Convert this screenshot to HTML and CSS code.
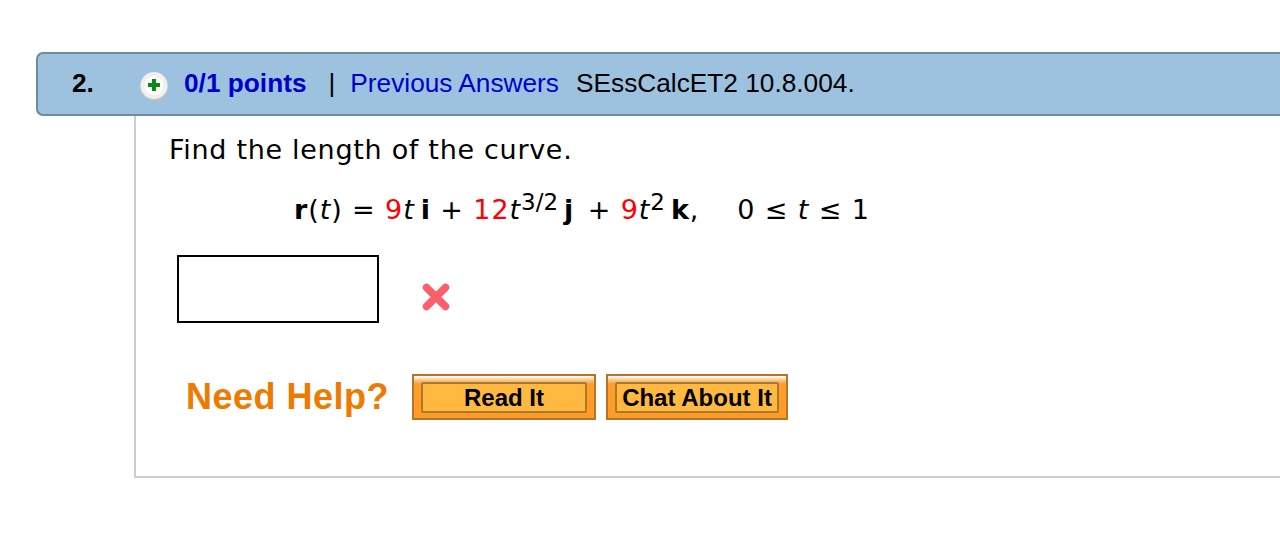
FILE: index.html
```html
<!DOCTYPE html>
<html lang="en">
<head>
    <meta charset="UTF-8">
    <meta name="viewport" content="width=device-width, initial-scale=1.0">
    <title>Question 2</title>
    <link rel="stylesheet" href="styles.css">
</head>
<body>
    <div class="question">
        <div class="header">
            <span class="number">2.</span>
            <svg class="plus" width="30" height="30" viewBox="0 0 30 30">
                <circle cx="15" cy="15.500" r="14" fill="#c4c4c4"/>
                <circle cx="15" cy="14.500" r="13.500" fill="#f0f0ee"/>
                <circle cx="15" cy="14.500" r="9.500" fill="#fff"/>
                <path d="M13 8h4v4h4v4h-4v4h-4v-4H9v-4h4z" fill="#0a8a14"/>
            </svg>
            <span class="points">0/1 points</span>
            <span class="sep">|</span>
            <a class="prev" href="#">Previous Answers</a>
            <span class="source">SEssCalcET2 10.8.004.</span>
        </div>
        <div class="body">
            <p class="prompt">Find the length of the curve.</p>
            <p class="formula"><b>r</b>(<i>t</i>) = <span class="red">9</span><i>t</i><b class="vec">i</b> + <span class="red">12</span><i>t</i><sup>3/2</sup><b class="vec vec-j">j</b> + <span class="red">9</span><i>t</i><sup>2</sup><b class="vec">k</b>,<span class="range">0 ≤ <i>t</i> ≤ 1</span></p>
            <div class="answer">
                <input class="answer-box" type="text">
                <svg class="wrong" width="32" height="32" viewBox="0 0 32 32">
                    <path d="M6.500 6.500l19 19M25.500 6.500l-19 19" stroke="#fb5f6b" stroke-width="7.500" stroke-linecap="round"/>
                </svg>
            </div>
            <div class="help">
                <span class="help-label">Need Help?</span>
                <span class="btn btn-read"><span class="btn-inner">Read It</span></span>
                <span class="btn btn-chat"><span class="btn-inner">Chat About It</span></span>
            </div>
        </div>
    </div>
</body>
</html>
```

FILE: styles.css
```css
body {
    margin: 0;
    background: #fff;
    font-family: "Liberation Sans", Arial, sans-serif;
    color: #000;
}
.question {
    padding: 52px 0 0 36px;
}
.header {
    display: flex;
    align-items: center;
    height: 58px;
    padding-bottom: 2px;
    padding-left: 34px;
    background: #9dc2df;
    border: 2px solid #6e8a9e;
    border-right: none;
    border-radius: 7px 0 0 7px;
    font-size: 26.250px;
    line-height: 58px;
}
.number {
    width: 67px;
    font-weight: bold;
}
.plus {
    margin: 6px 15px 0 0;
}
.points {
    font-weight: bold;
    color: #0000c8;
}
.sep {
    margin: 0 15px 0 22px;
}
.prev {
    color: #0000c8;
    text-decoration: none;
}
.source {
    margin-left: 17px;
}
.body {
    height: 360px;
    margin-left: 98px;
    padding-left: 33px;
    border-left: 2px solid #ccc;
    border-bottom: 2px solid #ccc;
}
.prompt {
    margin: 0;
    padding-top: 16px;
    font-family: "DejaVu Sans", sans-serif;
    font-size: 27px;
    line-height: 36px;
    letter-spacing: 0.7px;
    white-space: nowrap;
}
.formula {
    margin: 24px 0 0 125px;
    font-family: "DejaVu Sans", sans-serif;
    font-size: 27px;
    line-height: 36px;
    letter-spacing: 0.9px;
    white-space: nowrap;
}
.formula sup {
    font-size: 23px;
    letter-spacing: 0;
    line-height: 0;
    vertical-align: 9px;
}
.vec {
    margin-left: 6px;
}
.vec-j {
    margin-right: 4px;
}
.red {
    color: #f00;
}
.range {
    margin-left: 38px;
}
.answer {
    display: flex;
    align-items: center;
    margin: 27px 0 0 8px;
}
.answer-box {
    box-sizing: border-box;
    width: 202px;
    height: 68px;
    border: 2px solid #000;
    background: #fff;
}
.wrong {
    margin: 16px 0 0 41px;
}
.help {
    display: flex;
    align-items: center;
    margin-top: 51px;
    margin-left: 17px;
}
.help-label {
    width: 226px;
    font-size: 36px;
    letter-spacing: 0.5px;
    font-weight: bold;
    color: #ee7a00;
    white-space: nowrap;
}
.btn {
    box-sizing: border-box;
    display: block;
    height: 46px;
    padding: 6px 7px 5px 7px;
    background: linear-gradient(#fff 0, #f6c890 4px, #ff9e2b 8px, #ff9a26 100%);
    border: 2px solid #b5742c;
    margin-right: 10px;
}
.btn-read {
    width: 184px;
}
.btn-chat {
    width: 182px;
}
.btn-inner {
    box-sizing: border-box;
    display: flex;
    align-items: center;
    justify-content: center;
    height: 100%;
    background: #ffb941;
    border: 2px solid #a9792f;
    border-radius: 2px;
    font-size: 24px;
    font-weight: bold;
    white-space: nowrap;
}
```
